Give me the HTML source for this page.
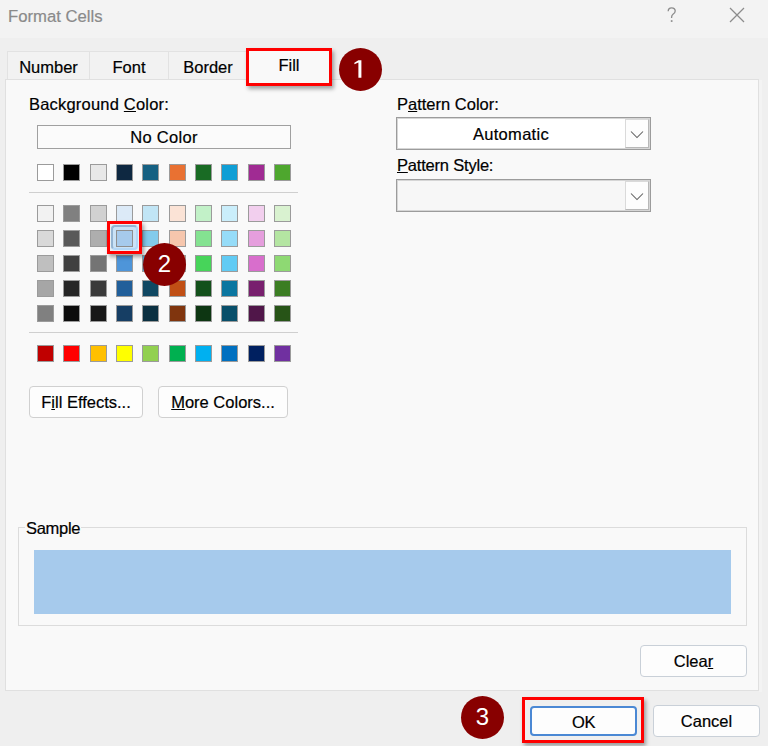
<!DOCTYPE html>
<html><head><meta charset="utf-8">
<style>
*{box-sizing:border-box;margin:0;padding:0}
html,body{width:768px;height:746px;overflow:hidden;background:#efefef;font-family:"Liberation Sans",sans-serif;color:#000;-webkit-text-stroke:0.2px}
.abs{position:absolute}
#title{left:0;top:0;width:768px;height:38px;background:#f3f3f3}
#title .t{left:8px;top:7px;font-size:16.7px;color:#8a8a8a}
.tab{position:absolute;top:51px;height:28px;background:#f2f2f2;border:1px solid #e2e2e2;border-bottom:none;font-size:16.5px;text-align:center;line-height:30px}
#panel{left:5px;top:79px;width:754px;height:612px;background:#f9f9f9;border:1px solid #e0e0e0}
.sw{position:absolute;width:17px;height:17px;border:1px solid #9b9b9b}
.sep{position:absolute;left:29px;width:269px;height:1px;background:#cfcfcf}
.btn{position:absolute;background:#fdfdfd;border:1px solid #d0d0d0;border-radius:4px;font-size:16.5px;text-align:center}
.lbl{position:absolute;font-size:16.5px;letter-spacing:0.2px}
.dd{position:absolute;border:1px solid #9c9c9c;box-shadow:inset 0 0 0 1px #d6d6d6;background:#fff}
.dd .ar{position:absolute;right:1px;top:1px;bottom:1px;width:24px;border:1px solid #dadada;border-right:1px solid #b8b8b8;border-bottom:1px solid #b8b8b8;background:#fdfdfd}
.dd svg{position:absolute;left:4px;top:10px}
.circ{position:absolute;width:43px;height:43px;border-radius:50%;background:#880000;color:#fff;font-size:24px;text-align:center;line-height:41px;-webkit-text-stroke:0}
.rb{position:absolute;border:3px solid #ff0000;box-shadow:2px 3px 4px rgba(0,0,0,.35)}
</style></head><body>
<div id="title" class="abs"><div class="t abs">Format Cells</div>
<svg class="abs" style="left:667px;top:7px" width="10" height="16"><path d="M1.2 4.2C1.2 2 2.6 0.8 4.6 0.8C6.7 0.8 8.2 2 8.2 4C8.2 5.6 7.3 6.4 6 7.3C5 8 4.6 8.6 4.6 10.2L4.6 11" fill="none" stroke="#8c8c8c" stroke-width="1.3"/><rect x="3.8" y="13.2" width="1.7" height="1.7" fill="#8c8c8c"/></svg>
<svg class="abs" style="left:729px;top:7px" width="16" height="16"><path d="M1 1L15 15M15 1L1 15" stroke="#8c8c8c" stroke-width="1.25"/></svg>
</div>
<div class="tab" style="left:7px;width:83px">Number</div>
<div class="tab" style="left:89px;width:80px">Font</div>
<div class="tab" style="left:168px;width:80px">Border</div>
<div class="abs" style="left:759px;top:80px;width:3px;height:612px;background:#f3f3f3"></div><div id="panel" class="abs"></div>
<div class="tab" style="left:248px;width:82px;top:50px;height:32px;background:#f9f9f9;border-color:#f9f9f9;line-height:28px">Fill</div>

<div class="lbl" style="left:29px;top:95px">Background <u>C</u>olor:</div>
<div class="abs" style="left:37px;top:125px;width:254px;height:24px;border:1px solid #a0a0a0;background:#fbfbfb;font-size:16.5px;text-align:center;line-height:22px;letter-spacing:0.3px">No Color</div>
<div class="sw" style="left:37px;top:164px;background:#FFFFFF"></div>
<div class="sw" style="left:37px;top:205px;background:#F2F2F2"></div>
<div class="sw" style="left:37px;top:230px;background:#D9D9D9"></div>
<div class="sw" style="left:37px;top:255px;background:#BFBFBF"></div>
<div class="sw" style="left:37px;top:280px;background:#A6A6A6"></div>
<div class="sw" style="left:37px;top:305px;background:#808080"></div>
<div class="sw" style="left:37px;top:345px;background:#C00000"></div>
<div class="sw" style="left:63px;top:164px;background:#000000"></div>
<div class="sw" style="left:63px;top:205px;background:#808080"></div>
<div class="sw" style="left:63px;top:230px;background:#595959"></div>
<div class="sw" style="left:63px;top:255px;background:#404040"></div>
<div class="sw" style="left:63px;top:280px;background:#262626"></div>
<div class="sw" style="left:63px;top:305px;background:#0D0D0D"></div>
<div class="sw" style="left:63px;top:345px;background:#FF0000"></div>
<div class="sw" style="left:90px;top:164px;background:#E8E8E8"></div>
<div class="sw" style="left:90px;top:205px;background:#D1D1D1"></div>
<div class="sw" style="left:90px;top:230px;background:#AEAEAE"></div>
<div class="sw" style="left:90px;top:255px;background:#747474"></div>
<div class="sw" style="left:90px;top:280px;background:#3A3A3A"></div>
<div class="sw" style="left:90px;top:305px;background:#171717"></div>
<div class="sw" style="left:90px;top:345px;background:#FFC000"></div>
<div class="sw" style="left:116px;top:164px;background:#0E2841"></div>
<div class="sw" style="left:116px;top:205px;background:#DCEAF7"></div>
<div class="sw" style="left:116px;top:230px;background:#A6CAEC"></div>
<div class="sw" style="left:116px;top:255px;background:#4E95D9"></div>
<div class="sw" style="left:116px;top:280px;background:#215F9A"></div>
<div class="sw" style="left:116px;top:305px;background:#163E64"></div>
<div class="sw" style="left:116px;top:345px;background:#FFFF00"></div>
<div class="sw" style="left:142px;top:164px;background:#156082"></div>
<div class="sw" style="left:142px;top:205px;background:#C1E5F5"></div>
<div class="sw" style="left:142px;top:230px;background:#83CBEB"></div>
<div class="sw" style="left:142px;top:255px;background:#46B1E1"></div>
<div class="sw" style="left:142px;top:280px;background:#104862"></div>
<div class="sw" style="left:142px;top:305px;background:#0B3041"></div>
<div class="sw" style="left:142px;top:345px;background:#92D050"></div>
<div class="sw" style="left:169px;top:164px;background:#E97132"></div>
<div class="sw" style="left:169px;top:205px;background:#FBE3D6"></div>
<div class="sw" style="left:169px;top:230px;background:#F6C6AD"></div>
<div class="sw" style="left:169px;top:255px;background:#F2AA84"></div>
<div class="sw" style="left:169px;top:280px;background:#C04F15"></div>
<div class="sw" style="left:169px;top:305px;background:#80350E"></div>
<div class="sw" style="left:169px;top:345px;background:#00B050"></div>
<div class="sw" style="left:195px;top:164px;background:#196B24"></div>
<div class="sw" style="left:195px;top:205px;background:#C2F1C8"></div>
<div class="sw" style="left:195px;top:230px;background:#84E291"></div>
<div class="sw" style="left:195px;top:255px;background:#47D45A"></div>
<div class="sw" style="left:195px;top:280px;background:#13501B"></div>
<div class="sw" style="left:195px;top:305px;background:#0D3612"></div>
<div class="sw" style="left:195px;top:345px;background:#00B0F0"></div>
<div class="sw" style="left:221px;top:164px;background:#0F9ED5"></div>
<div class="sw" style="left:221px;top:205px;background:#CAEEFB"></div>
<div class="sw" style="left:221px;top:230px;background:#96DCF8"></div>
<div class="sw" style="left:221px;top:255px;background:#61CBF4"></div>
<div class="sw" style="left:221px;top:280px;background:#0B76A0"></div>
<div class="sw" style="left:221px;top:305px;background:#084F6A"></div>
<div class="sw" style="left:221px;top:345px;background:#0070C0"></div>
<div class="sw" style="left:248px;top:164px;background:#A02B93"></div>
<div class="sw" style="left:248px;top:205px;background:#F2CFEE"></div>
<div class="sw" style="left:248px;top:230px;background:#E59EDD"></div>
<div class="sw" style="left:248px;top:255px;background:#D86ECC"></div>
<div class="sw" style="left:248px;top:280px;background:#78206E"></div>
<div class="sw" style="left:248px;top:305px;background:#501649"></div>
<div class="sw" style="left:248px;top:345px;background:#002060"></div>
<div class="sw" style="left:274px;top:164px;background:#4EA72E"></div>
<div class="sw" style="left:274px;top:205px;background:#D9F2D0"></div>
<div class="sw" style="left:274px;top:230px;background:#B4E5A2"></div>
<div class="sw" style="left:274px;top:255px;background:#8ED973"></div>
<div class="sw" style="left:274px;top:280px;background:#3B7D23"></div>
<div class="sw" style="left:274px;top:305px;background:#275417"></div>
<div class="sw" style="left:274px;top:345px;background:#7030A0"></div>
<div class="sep" style="top:192px"></div>
<div class="sep" style="top:332px"></div>
<div class="abs" style="left:110px;top:224px;width:29px;height:27px;background:#e6eef3"></div><div class="abs" style="left:111px;top:225px;width:27px;height:25px;border-radius:4px;background:#cae2f6;border:2px solid #b2d6f6;border-top-color:#93b4d2;border-left-color:#93b4d2"></div>
<div class="sw" style="left:116px;top:230px;background:#A6CAEC;border-color:#8e8e8e"></div>

<div class="btn" style="left:29px;top:386px;width:114px;height:32px;line-height:30px">F<u>i</u>ll Effects...</div>
<div class="btn" style="left:158px;top:386px;width:130px;height:32px;line-height:30px"><u>M</u>ore Colors...</div>

<div class="lbl" style="left:397px;top:95px;letter-spacing:0">P<u>a</u>ttern Color:</div>
<div class="dd" style="left:396px;top:117px;width:255px;height:33px"><div class="abs" style="left:0;right:25px;top:0;line-height:33px;text-align:center;font-size:16.5px;letter-spacing:0.3px">Automatic</div><div class="ar"><svg width="14" height="9"><path d="M1 1.5l6 6 6-6" fill="none" stroke="#5e5e5e" stroke-width="1.05"/></svg></div></div>
<div class="lbl" style="left:397px;top:156px;letter-spacing:-0.2px"><u>P</u>attern Style:</div>
<div class="dd" style="left:396px;top:179px;width:255px;height:33px;background:#f7f7f7"><div class="ar"><svg width="14" height="9"><path d="M1 1.5l6 6 6-6" fill="none" stroke="#5e5e5e" stroke-width="1.05"/></svg></div></div>

<div class="abs" style="left:18px;top:527px;width:729px;height:99px;border:1px solid #dcdcdc"></div>
<div class="lbl" style="left:25px;top:519px;background:#f9f9f9;padding:0 1px;letter-spacing:-0.3px">Sample</div>
<div class="abs" style="left:34px;top:550px;width:697px;height:64px;background:#a6caec"></div>

<div class="btn" style="left:640px;top:645px;width:107px;height:32px;line-height:30px;border-color:#c9d0d8">Clea<u>r</u></div>
<div class="btn" style="left:530px;top:706px;width:107px;height:30px;line-height:28px;border:2px solid #4a88d4;letter-spacing:-0.5px">OK</div>
<div class="btn" style="left:653px;top:705px;width:107px;height:32px;line-height:30px;border-color:#c9d0d8">Cancel</div>

<div class="rb" style="left:246px;top:48px;width:86px;height:38px"></div>
<div class="rb" style="left:107px;top:221px;width:35px;height:33px"></div>
<div class="rb" style="left:522px;top:697px;width:122px;height:46px"></div>
<div class="circ" style="left:339px;top:48px"><svg style="position:absolute;left:0;top:0" width="43" height="43"><path d="M19.4 12.2H22.4V29.8H19.4V14.6L15.4 16.3V14.8Z" fill="#fff"/></svg></div>
<div class="circ" style="left:143px;top:243px">2</div>
<div class="circ" style="left:461px;top:696px">3</div>
</body></html>
